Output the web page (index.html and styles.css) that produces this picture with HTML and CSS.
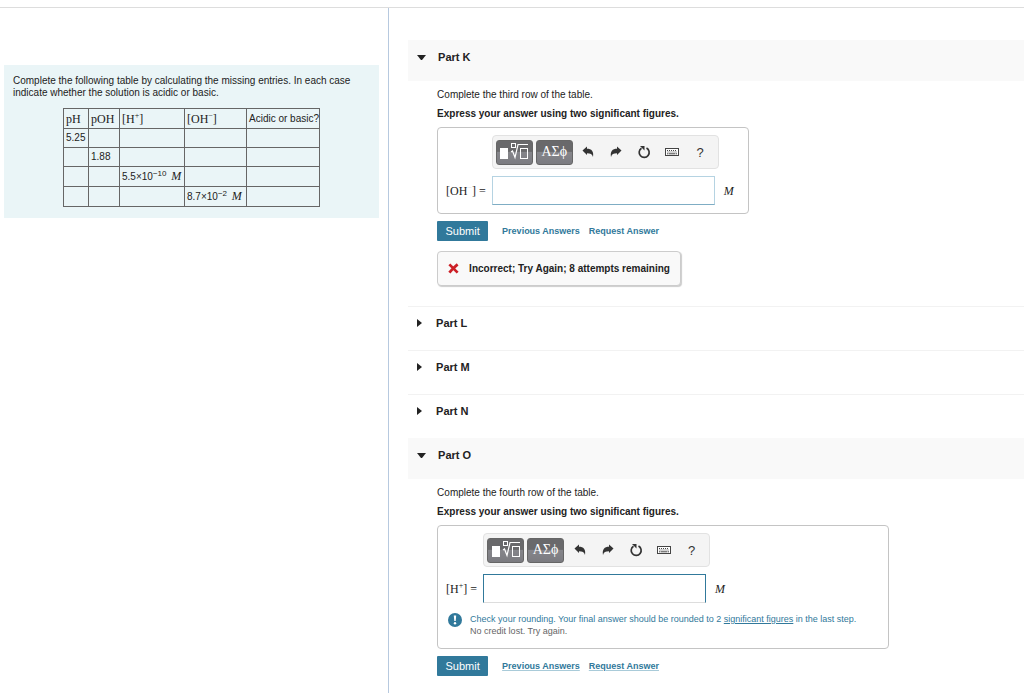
FILE: index.html
```html
<!DOCTYPE html>
<html lang="en">
<head>
    <meta charset="UTF-8">
    <meta name="viewport" content="width=device-width, initial-scale=1.0">
    <title>pH and pOH Table</title>
    <link rel="stylesheet" href="styles.css">
</head>
<body>
    <!-- Shared icons -->
    <svg class="icon-defs" aria-hidden="true">
        <symbol id="icon-template" viewBox="0 2 30 20">
            <rect x="1" y="8" width="8" height="11" fill="#fff"/>
            <rect x="12.500" y="3.500" width="4" height="4" fill="none" stroke="#fff"/>
            <path d="M12 12l1.500-1 2.500 6.500L19 4.500h10" fill="none" stroke="#fff" stroke-width="1.200"/>
            <rect x="21.500" y="8.500" width="7" height="10" fill="none" stroke="#fff"/>
        </symbol>
        <symbol id="icon-undo" viewBox="0 0 12 12">
            <path d="M0.500 4.500L5 0.500v2.200c4.500 0 7 2.500 6 8.300c-0.700-2.700-2.500-3.700-6-3.700V9z" fill="#333"/>
        </symbol>
        <symbol id="icon-redo" viewBox="0 0 12 12">
            <path d="M11.500 4.500L7 0.500v2.200c-4.500 0-7 2.500-6 8.300c0.700-2.700 2.500-3.700 6-3.700V9z" fill="#333"/>
        </symbol>
        <symbol id="icon-reset" viewBox="0 0 14 14">
            <path d="M9.500 3a5 5 0 1 1-5 0.200" fill="none" stroke="#333" stroke-width="1.700"/>
            <path d="M3 1h4.500v4.500z" fill="#333"/>
        </symbol>
        <symbol id="icon-keyboard" viewBox="0 0 14 10">
            <rect x="0.500" y="1.500" width="13" height="7" fill="#fff" stroke="#444"/>
            <path d="M2 3.500h10M2.500 5h9" stroke="#444" stroke-dasharray="1 1"/>
            <path d="M2 6.800h1.500M4 6.800h6M10.500 6.800h1.500" stroke="#444"/>
        </symbol>
    </svg>

    <div class="page">
        <aside class="problem">
            <div class="problem-box">
                <p>Complete the following table by calculating the missing entries. In each case indicate whether the solution is acidic or basic.</p>
                <table class="entries">
                    <thead>
                        <tr>
                            <th class="math col-ph">pH</th>
                            <th class="math col-poh">pOH</th>
                            <th class="math col-h">[H<sup>+</sup>]</th>
                            <th class="math col-oh">[OH<sup>−</sup>]</th>
                            <th class="col-type">Acidic or basic?</th>
                        </tr>
                    </thead>
                    <tbody>
                        <tr><td>5.25</td><td></td><td></td><td></td><td></td></tr>
                        <tr><td></td><td>1.88</td><td></td><td></td><td></td></tr>
                        <tr><td></td><td></td><td>5.5×10<sup>−10</sup> <i class="unit">M</i></td><td></td><td></td></tr>
                        <tr><td></td><td></td><td></td><td>8.7×10<sup>−2</sup> <i class="unit">M</i></td><td></td></tr>
                    </tbody>
                </table>
            </div>
        </aside>

        <main class="parts">
            <section class="part open">
                <h2><button class="part-header" aria-expanded="true"><span class="arrow"></span>Part K</button></h2>
                <div class="part-body">
                    <p>Complete the third row of the table.</p>
                    <p class="instructions">Express your answer using two significant figures.</p>
                    <div class="answer-box">
                        <div class="answer-grid">
                            <div class="toolbar">
                                <button class="tool-dark" aria-label="Templates"><svg class="icon-template"><use href="#icon-template"/></svg></button>
                                <button class="tool-dark">ΑΣϕ</button>
                                <button class="tool" aria-label="Undo"><svg class="icon"><use href="#icon-undo"/></svg></button>
                                <button class="tool" aria-label="Redo"><svg class="icon"><use href="#icon-redo"/></svg></button>
                                <button class="tool" aria-label="Reset"><svg class="icon-large"><use href="#icon-reset"/></svg></button>
                                <button class="tool" aria-label="Keyboard shortcuts"><svg class="icon-large"><use href="#icon-keyboard"/></svg></button>
                                <button class="tool help">?</button>
                            </div>
                            <label class="math" for="answerK">[OH<sup class="faint">−</sup>] =</label>
                            <input type="text" id="answerK" class="answer-input">
                            <i class="unit">M</i>
                        </div>
                    </div>
                    <div class="actions">
                        <button class="submit">Submit</button>
                        <a href="#">Previous Answers</a>
                        <a href="#">Request Answer</a>
                    </div>
                    <div class="feedback">
                        <svg class="icon-cross" viewBox="0 0 12 12" aria-hidden="true"><path d="M1.500 1.500Q5 5 10.500 10.500M10.500 1.500Q5 6 1.500 10.500" stroke="#cc2027" stroke-width="3" fill="none"/></svg>
                        <span>Incorrect; Try Again; 8 attempts remaining</span>
                    </div>
                </div>
            </section>

            <section class="part">
                <h2><button class="part-header" aria-expanded="false"><span class="arrow"></span>Part L</button></h2>
            </section>
            <section class="part">
                <h2><button class="part-header" aria-expanded="false"><span class="arrow"></span>Part M</button></h2>
            </section>
            <section class="part">
                <h2><button class="part-header" aria-expanded="false"><span class="arrow"></span>Part N</button></h2>
            </section>

            <section class="part open">
                <h2><button class="part-header" aria-expanded="true"><span class="arrow"></span>Part O</button></h2>
                <div class="part-body">
                    <p>Complete the fourth row of the table.</p>
                    <p class="instructions">Express your answer using two significant figures.</p>
                    <div class="answer-box with-hint">
                        <div class="answer-grid">
                            <div class="toolbar">
                                <button class="tool-dark" aria-label="Templates"><svg class="icon-template"><use href="#icon-template"/></svg></button>
                                <button class="tool-dark">ΑΣϕ</button>
                                <button class="tool" aria-label="Undo"><svg class="icon"><use href="#icon-undo"/></svg></button>
                                <button class="tool" aria-label="Redo"><svg class="icon"><use href="#icon-redo"/></svg></button>
                                <button class="tool" aria-label="Reset"><svg class="icon-large"><use href="#icon-reset"/></svg></button>
                                <button class="tool" aria-label="Keyboard shortcuts"><svg class="icon-large"><use href="#icon-keyboard"/></svg></button>
                                <button class="tool help">?</button>
                            </div>
                            <label class="math" for="answerO">[H<sup>+</sup>] =</label>
                            <input type="text" id="answerO" class="answer-input active">
                            <i class="unit">M</i>
                        </div>
                        <div class="hint">
                            <svg class="icon-info" viewBox="0 0 14 14" aria-hidden="true"><circle cx="7" cy="7" r="7" fill="#31799b"/><path d="M5.800 2.500h2.400l-0.500 5.500h-1.400z" fill="#fff"/><circle cx="7" cy="10.300" r="1.200" fill="#fff"/></svg>
                            <div>
                                <p class="hint-main">Check your rounding. Your final answer should be rounded to 2 <a href="#">significant figures</a> in the last step.</p>
                                <p>No credit lost. Try again.</p>
                            </div>
                        </div>
                    </div>
                    <div class="actions underlined">
                        <button class="submit">Submit</button>
                        <a href="#">Previous Answers</a>
                        <a href="#">Request Answer</a>
                    </div>
                </div>
            </section>
        </main>
    </div>
</body>
</html>
```
FILE: styles.css
```css
* {
    box-sizing: border-box;
}
body {
    margin: 0;
    padding-top: 7px;
    font-family: "Liberation Sans", Arial, sans-serif;
    font-size: 10px;
    line-height: 12px;
    color: #222;
    background-color: #fff;
}
p, h2 {
    margin: 0;
}
button {
    font-family: inherit;
    padding: 0;
    border: none;
    background: none;
    cursor: pointer;
}
a {
    color: #31799b;
}
.icon-defs {
    display: none;
}
.page {
    display: flex;
    min-height: calc(100vh - 7px);
    border-top: 1px solid #ddd;
}
/* Left column */
.problem {
    width: 38%;
    flex-shrink: 0;
    padding: 57px 9px 0 4px;
    border-right: 1px solid #b7c9df;
}
.problem-box {
    padding: 10px 9px 11px;
    background-color: #eaf5f7;
}
.entries {
    margin: 9px 0 0 50px;
    border-collapse: collapse;
}
.entries th,
.entries td {
    height: 19px;
    padding: 0 0 0 2px;
    border: 1px solid #666;
    text-align: left;
    font-weight: normal;
    white-space: nowrap;
}
.entries th {
    height: 20px;
}
.entries tr:nth-child(n+3) td {
    height: 20px;
}
.col-ph {
    width: 25px;
}
.col-poh {
    width: 31px;
}
.col-h {
    width: 65px;
}
.col-oh {
    width: 62px;
}
.col-type {
    width: 73px;
}
sup {
    font-size: 8px;
    line-height: 0;
}
.math,
.unit {
    font-family: "Liberation Serif", "Times New Roman", serif;
    font-size: 12px;
}
.entries .unit {
    margin-left: 2px;
}
/* Right column */
.parts {
    flex: 1;
    min-width: 0;
    padding: 32px 0 0 19px;
}
.part {
    border-top: 1px solid #f2f2f2;
}
.part-header {
    display: flex;
    align-items: center;
    width: 100%;
    height: 43px;
    padding: 0 0 12px 9px;
    font-size: 11px;
    font-weight: bold;
    color: #222;
}
.part.open {
    border-top: none;
}
.open .part-header {
    height: 41px;
    padding-bottom: 7px;
    background-color: #f9f9f9;
}
.arrow {
    width: 5px;
    margin-right: 14px;
    border-left: 5px solid #222;
    border-top: 4px solid transparent;
    border-bottom: 4px solid transparent;
}
.open .arrow {
    width: 9px;
    margin-right: 12px;
    border-left: 4px solid transparent;
    border-right: 4px solid transparent;
    border-top: 5px solid #222;
    border-bottom: none;
}
.part-body {
    padding: 8px 0 20px 29px;
}
.instructions {
    margin-top: 7px;
    font-weight: bold;
}
.answer-box {
    width: fit-content;
    margin-top: 7px;
    padding: 7px 12px 8px 8px;
    border: 1px solid #c4c4c4;
    border-radius: 4px;
}
.with-hint {
    min-width: 452px;
}
.answer-grid {
    display: grid;
    grid-template-columns: auto 223px auto;
    align-items: center;
    justify-content: start;
    column-gap: 6px;
    row-gap: 7px;
}
.toolbar {
    grid-column: 2 / 4;
    justify-self: start;
    display: flex;
    align-items: center;
    gap: 3px;
    width: 227px;
    height: 34px;
    padding: 0 3px;
    border: 1px solid #e2e2e2;
    border-radius: 4px;
    background-color: #f4f4f4;
}
.tool-dark {
    display: flex;
    align-items: center;
    justify-content: center;
    width: 37px;
    height: 25px;
    border: 1px solid #666;
    border-radius: 3px;
    background: linear-gradient(#69696b 45%, #85858a 50%, #7b7b80);
    color: #fff;
    font-family: "Liberation Serif", "Times New Roman", serif;
    font-size: 14px;
}
.tool {
    display: flex;
    align-items: center;
    justify-content: center;
    width: 25px;
    height: 25px;
    color: #333;
}
.help {
    font-size: 13px;
}
.icon-template {
    width: 30px;
    height: 20px;
}
.icon {
    width: 12px;
    height: 12px;
}
.icon-large {
    width: 14px;
    height: 14px;
}
.faint {
    color: #ddd;
}
.answer-input {
    width: 100%;
    height: 29px;
    padding: 0 4px;
    border: 1px solid #b5d3e2;
    border-bottom-color: #7fadc4;
    outline: none;
}
.answer-input.active {
    border-color: #31799b;
    border-bottom-color: #ddd;
}
.answer-grid .unit {
    padding: 0 2px 0 3px;
}
.hint {
    display: flex;
    gap: 8px;
    margin: 10px 0 3px;
    font-size: 9px;
    color: #666;
}
.hint-main {
    color: #31799b;
}
.icon-info {
    flex-shrink: 0;
    width: 14px;
    height: 14px;
    margin-left: 2px;
}
.actions {
    display: flex;
    align-items: center;
    gap: 9px;
    margin-top: 7px;
}
.actions a {
    font-size: 9px;
    font-weight: bold;
    text-decoration: none;
}
.underlined a {
    text-decoration: underline;
    text-decoration-color: #a9cbd9;
}
.submit {
    width: 51px;
    height: 20px;
    margin-right: 5px;
    border-radius: 1px;
    background-color: #31799b;
    color: #fff;
    font-size: 11px;
}
.feedback {
    display: flex;
    align-items: center;
    gap: 10px;
    width: fit-content;
    height: 35px;
    margin-top: 10px;
    padding: 0 10px;
    border: 1px solid #ccc;
    border-radius: 4px;
    background-color: #f9f9f9;
    box-shadow: 1px 1px 1px #ccc;
    font-weight: bold;
}
.icon-cross {
    width: 11px;
    height: 11px;
}
```
